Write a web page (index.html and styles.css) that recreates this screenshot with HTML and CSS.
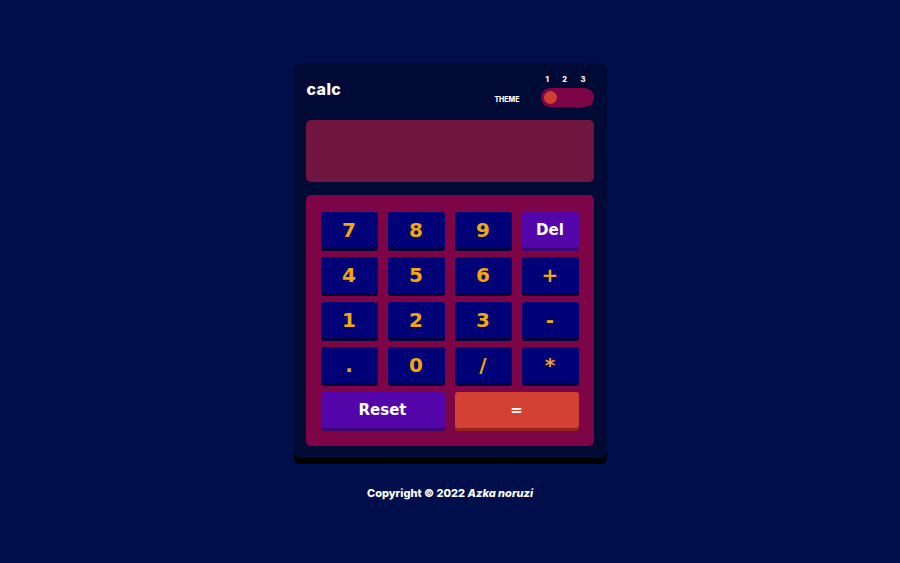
FILE: index.html
```html
<!DOCTYPE html>
<html lang="en">
<head>
    <meta charset="UTF-8" />
    <title>Calculator</title>
    <meta name="viewport" content="width=device-width, initial-scale=1" />
    <link rel="stylesheet" href="styles.css">
</head>
<body>
    <main class="calc">
        <header class="calc-head">
            <h1 class="logo">calc</h1>
            <div class="theme">
                <span class="theme-label">THEME</span>
                <div class="theme-switch">
                    <div class="theme-nums"><span>1</span><span>2</span><span>3</span></div>
                    <div class="toggle"><span class="knob"></span></div>
                </div>
            </div>
        </header>

        <div class="screen" id="screen"></div>

        <div class="keypad">
            <button class="key">7</button>
            <button class="key">8</button>
            <button class="key">9</button>
            <button class="key key-fn">Del</button>
            <button class="key">4</button>
            <button class="key">5</button>
            <button class="key">6</button>
            <button class="key">+</button>
            <button class="key">1</button>
            <button class="key">2</button>
            <button class="key">3</button>
            <button class="key">-</button>
            <button class="key">.</button>
            <button class="key">0</button>
            <button class="key">/</button>
            <button class="key">*</button>
            <button class="key key-fn key-wide">Reset</button>
            <button class="key key-eq key-wide">=</button>
        </div>
    </main>

    <footer class="copy">Copyright &copy; 2022 <em>Azka noruzi</em></footer>
</body>
</html>
```

FILE: styles.css
```css
body {
    margin: 0;
    min-height: 563px;
    background-color: #000e4b;
    font-family: "Inter", "Open Sans", sans-serif;
    color: #fff;
    display: flex;
    flex-direction: column;
    align-items: center;
}
.calc {
    margin-top: 63px;
    width: 288px;
    padding: 12px 13px 12px 12px;
    background-color: #000a35;
    border-radius: 6px;
    box-shadow: 0 6px 0 #000000;
}
.calc-head {
    display: flex;
    justify-content: space-between;
    align-items: flex-start;
    height: 45px;
}
.logo {
    margin: 4px 0 0 1px;
    font-size: 16px;
    font-weight: 800;
    letter-spacing: 0.4px;
}
.theme {
    display: flex;
    align-items: flex-end;
    gap: 21px;
}
.theme-label {
    font-size: 7px;
    font-weight: 800;
    margin-bottom: 3px;
}
.theme-switch {
    display: flex;
    flex-direction: column;
    gap: 4px;
}
.theme-nums {
    display: flex;
    justify-content: space-between;
    padding: 0 8px 0 5px;
    font-size: 7.5px;
    font-weight: 800;
    line-height: 9px;
}
.toggle {
    width: 53px;
    height: 19px;
    border-radius: 10px;
    background-color: #7d0547;
    display: flex;
    align-items: center;
    padding-left: 3px;
    box-sizing: border-box;
}
.knob {
    width: 13px;
    height: 13px;
    border-radius: 50%;
    background-color: #d03f2f;
}
.screen {
    height: 62px;
    border-radius: 5px;
    background-color: #701540;
}
.keypad {
    margin-top: 13px;
    padding: 17px 15px 18px;
    background-color: #7d0547;
    border-radius: 5px;
    display: grid;
    grid-template-columns: repeat(4, 57px);
    grid-auto-rows: 36px;
    column-gap: 10px;
    row-gap: 9px;
}
.key {
    border: none;
    border-radius: 3px;
    background-color: #000077;
    box-shadow: 0 3px 0 #00003d;
    color: #f1a70f;
    font-family: "DejaVu Sans", sans-serif;
    font-weight: bold;
    font-size: 20px;
    padding: 0;
    cursor: pointer;
}
.key-fn {
    background-color: #5305aa;
    box-shadow: 0 3px 0 #3a0673;
    color: #fff;
    font-size: 15px;
}
.key-wide {
    grid-column: span 2;
}
.key-eq {
    background-color: #d24131;
    box-shadow: 0 3px 0 #96261c;
    color: #fff;
    font-size: 15px;
}
.copy {
    margin-top: 28px;
    font-size: 11px;
    font-weight: 800;
}
.copy em {
    font-style: italic;
}
```
